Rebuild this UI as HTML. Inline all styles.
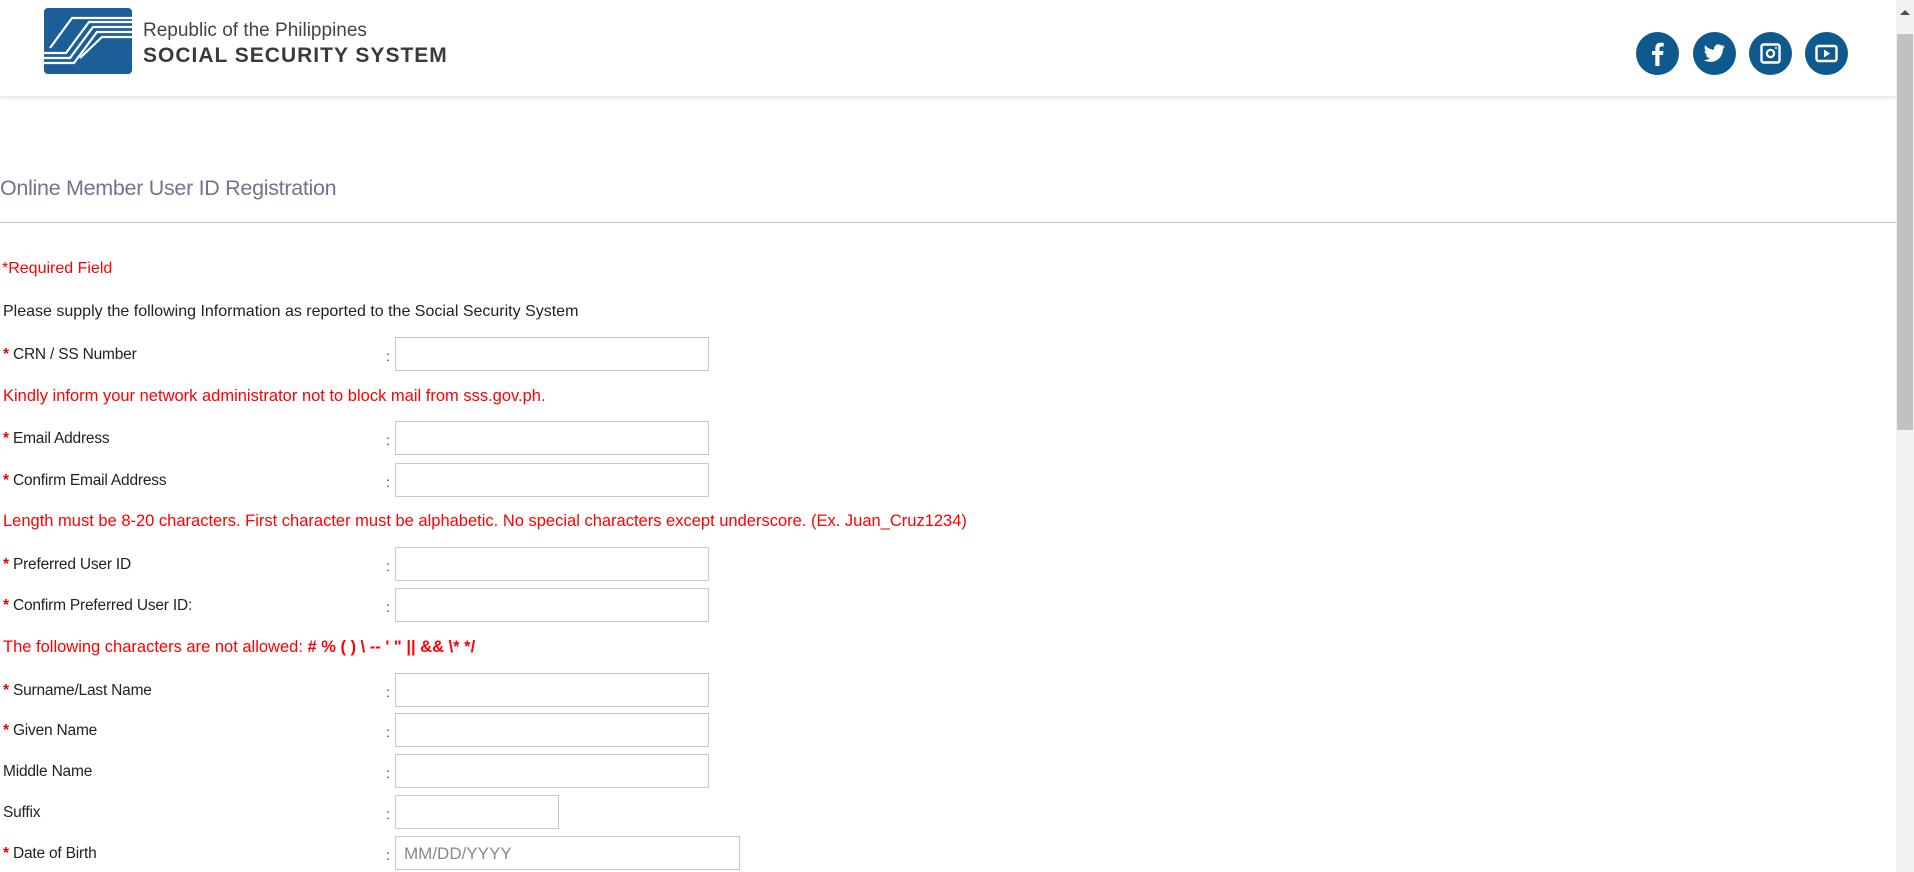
<!DOCTYPE html>
<html><head><meta charset="utf-8"><style>
*{margin:0;padding:0;box-sizing:border-box}
body{width:1914px;height:872px;overflow:hidden;background:#fff;font-family:"Liberation Sans",Arial,sans-serif;position:relative}
.hdr{position:absolute;left:0;top:0;width:1896px;height:97px;background:#fff;box-shadow:0 2px 4px rgba(0,0,0,0.08);border-bottom:1px solid #e6e8ee}
.a{position:absolute;white-space:nowrap}
.lbl{font-size:15.5px;color:#222;letter-spacing:-0.2px}
.st{color:#e00;font-weight:bold}
.red{color:#f00;font-size:16.5px}
.col{font-size:14px;color:#333}
.inp{position:absolute;height:34px;border:1px solid #c8c8c8;background:#fff}
.ic{position:absolute;top:32px;width:43px;height:43px;border-radius:50%;background:#0e5a8e}
</style></head><body>
<div class="hdr">
<svg class="a" style="left:44px;top:8px" width="88" height="66" viewBox="0 0 88 66">
<rect width="88" height="66" rx="4" fill="#1b5e98"/>
<g stroke="#fff" stroke-width="2.2" fill="none">
<path d="M0 45 H22 L45 14 H88"/>
<path d="M0 50 H26 L49 19 H88"/>
<path d="M0 55 H30 L53 24 H88"/>
<path d="M6 40 L28 10 H88"/>
<path d="M36 50 L58 29 H88"/>
</g></svg>
<div class="a" style="left:143px;top:20px;font-size:19px;color:#444">Republic of the Philippines</div>
<div class="a" style="left:143px;top:44px;font-size:21px;font-weight:bold;color:#3a3a3a;letter-spacing:1px">SOCIAL SECURITY SYSTEM</div>
<div class="ic" style="left:1636px"><svg width="43" height="43" viewBox="0 0 43 43"><path d="M23.5 34V23h3.5l.5-4h-4v-2.5c0-1.2.4-2 2-2h2.2v-3.6c-.4 0-1.7-.2-3.2-.2-3.2 0-5.2 1.9-5.2 5.4V19H16v4h3.3v11z" fill="#fff"/></svg></div>
<div class="ic" style="left:1693px"><svg width="43" height="43" viewBox="0 0 43 43"><path d="M32 14.5c-.8.4-1.6.6-2.5.7.9-.5 1.6-1.4 1.9-2.4-.8.5-1.8.9-2.7 1-1.7-1.8-4.6-1.9-6.4-.2-1.1 1.1-1.6 2.7-1.2 4.2-3.5-.2-6.7-1.8-8.9-4.5-1.2 2-.6 4.6 1.3 5.9-.7 0-1.4-.2-2-.5 0 2.1 1.5 3.9 3.5 4.3-.6.2-1.3.2-2 .1.6 1.8 2.2 3 4.1 3-1.8 1.4-4.1 2.1-6.4 1.8 2 1.3 4.3 2 6.7 2 8.1 0 12.5-6.7 12.5-12.5v-.6c.9-.6 1.6-1.4 2.1-2.3z" fill="#fff"/></svg></div>
<div class="ic" style="left:1749px"><svg width="43" height="43" viewBox="0 0 43 43"><rect x="12.5" y="12.5" width="18" height="18" rx="2" fill="none" stroke="#fff" stroke-width="2.4"/><circle cx="21.5" cy="21.5" r="3.6" fill="none" stroke="#fff" stroke-width="2.2"/><circle cx="27" cy="16" r="1" fill="#fff"/></svg></div>
<div class="ic" style="left:1805px"><svg width="43" height="43" viewBox="0 0 43 43"><rect x="11.5" y="14" width="20" height="15" rx="2" fill="none" stroke="#fff" stroke-width="2.4"/><path d="M19 17.5v8l6-4z" fill="#fff"/></svg></div>
</div>
<!-- scrollbar -->
<div class="a" style="left:1896px;top:0;width:18px;height:872px;background:#f1f1f1"></div>
<div class="a" style="left:1900px;top:10px;width:0;height:0;border-left:5px solid transparent;border-right:5px solid transparent;border-bottom:5px solid #505050"></div>
<div class="a" style="left:1897px;top:34px;width:16px;height:396px;background:#c1c1c1"></div>

<div class="a" style="left:0;top:176px;font-size:21.5px;color:#72748a;letter-spacing:-0.3px">Online Member User ID Registration</div>
<div class="a" style="left:0;top:222px;width:1896px;height:1px;background:#c8c8c8"></div>
<div class="a" style="left:2px;top:260px;font-size:16px;color:#f00">*Required Field</div>
<div class="a" style="left:3px;top:303px;font-size:16px;color:#222">Please supply the following Information as reported to the Social Security System</div>

<div class="a lbl" style="left:3px;top:346px"><span class="st">*</span> CRN / SS Number</div>
<div class="a col" style="left:386px;top:348px">:</div><div class="inp" style="left:395px;top:337px;width:314px"></div>
<div class="a red" style="left:3px;top:387px">Kindly inform your network administrator not to block mail from sss.gov.ph.</div>

<div class="a lbl" style="left:3px;top:430px"><span class="st">*</span> Email Address</div>
<div class="a col" style="left:386px;top:432px">:</div><div class="inp" style="left:395px;top:421px;width:314px"></div>
<div class="a lbl" style="left:3px;top:472px"><span class="st">*</span> Confirm Email Address</div>
<div class="a col" style="left:386px;top:474px">:</div><div class="inp" style="left:395px;top:463px;width:314px"></div>
<div class="a red" style="left:3px;top:512px">Length must be 8-20 characters. First character must be alphabetic. No special characters except underscore. (Ex. Juan_Cruz1234)</div>

<div class="a lbl" style="left:3px;top:556px"><span class="st">*</span> Preferred User ID</div>
<div class="a col" style="left:386px;top:558px">:</div><div class="inp" style="left:395px;top:547px;width:314px"></div>
<div class="a lbl" style="left:3px;top:597px"><span class="st">*</span> Confirm Preferred User ID:</div>
<div class="a col" style="left:386px;top:599px">:</div><div class="inp" style="left:395px;top:588px;width:314px"></div>
<div class="a red" style="left:3px;top:638px">The following characters are not allowed: <b># % ( ) \ -- ' " || &amp;&amp; \* */</b></div>

<div class="a lbl" style="left:3px;top:682px"><span class="st">*</span> Surname/Last Name</div>
<div class="a col" style="left:386px;top:684px">:</div><div class="inp" style="left:395px;top:673px;width:314px"></div>
<div class="a lbl" style="left:3px;top:722px"><span class="st">*</span> Given Name</div>
<div class="a col" style="left:386px;top:724px">:</div><div class="inp" style="left:395px;top:713px;width:314px"></div>
<div class="a lbl" style="left:3px;top:763px">Middle Name</div>
<div class="a col" style="left:386px;top:765px">:</div><div class="inp" style="left:395px;top:754px;width:314px"></div>
<div class="a lbl" style="left:3px;top:804px">Suffix</div>
<div class="a col" style="left:386px;top:806px">:</div><div class="inp" style="left:395px;top:795px;width:164px"></div>
<div class="a lbl" style="left:3px;top:845px"><span class="st">*</span> Date of Birth</div>
<div class="a col" style="left:386px;top:847px">:</div><div class="inp" style="left:395px;top:836px;width:345px"></div>
<div class="a" style="left:404px;top:844px;font-size:17px;color:#888">MM/DD/YYYY</div>
</body></html>
